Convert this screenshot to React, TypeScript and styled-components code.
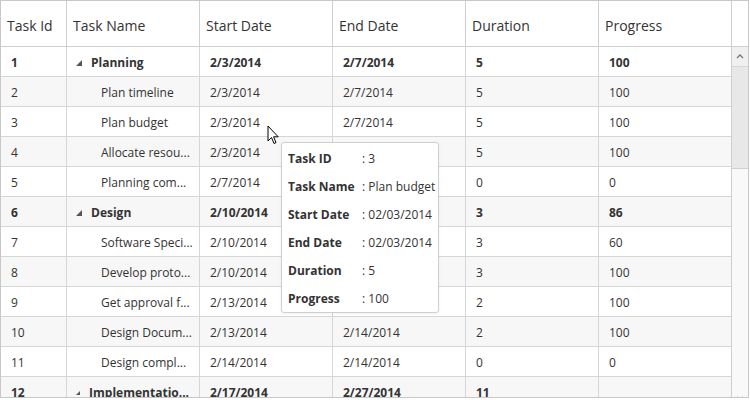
import React from 'react';
import styled, { createGlobalStyle } from 'styled-components';

const GlobalStyle = createGlobalStyle`
	html, body {
		margin: 0;
		padding: 0;
		background: #fff;
	}
	body {
		font-family: 'Open Sans', 'Noto Sans', sans-serif;
		color: #333;
	}
`;

const COLS = '65px 132px 132px 132px 132px 132px 16px';

const Page = styled.div`
	position: relative;
	width: 750px;
	height: 400px;
	overflow: hidden;
`;

const Grid = styled.div`
	width: 749px;
	height: 398px;
	box-sizing: border-box;
	border: 1px solid #c8c8c8;
	overflow: hidden;
	display: flex;
	flex-direction: column;
`;

const HeaderRow = styled.div`
	display: grid;
	grid-template-columns: ${COLS};
	column-gap: 1px;
	background: #cfcfcf;
	border-bottom: 1px solid #cfcfcf;
`;

const HeaderCell = styled.div`
	height: 45px;
	box-sizing: border-box;
	background: #fff;
	display: flex;
	align-items: center;
	padding: 3px 6px 0;
	font-size: 14px;
	color: #333;
`;

const Body = styled.div`
	display: grid;
	grid-template-columns: 1fr 16px;
	column-gap: 1px;
	background: #cfcfcf;
	flex: 1;
	min-height: 0;
`;

const Rows = styled.div`
	display: flex;
	flex-direction: column;
	background: #fff;
`;

const Row = styled.div<{ $alt: boolean }>`
	display: grid;
	grid-template-columns: 65px 132px 132px 132px 132px 132px;
	column-gap: 1px;
	background: #d6d6d6;
	border-bottom: 1px solid #d6d6d6;
	flex-shrink: 0;

	& > div {
		background: ${(p) => (p.$alt ? '#f7f7f7' : '#fff')};
	}
`;

const Cell = styled.div<{ $bold?: boolean }>`
	height: 29px;
	box-sizing: border-box;
	display: flex;
	align-items: center;
	padding: 2px 10px 0;
	font-size: 12px;
	font-weight: ${(p) => (p.$bold ? 700 : 400)};
	white-space: nowrap;
	overflow: hidden;
`;

const NameCell = styled(Cell)<{ $child?: boolean }>`
	padding-left: ${(p) => (p.$child ? '34px' : '9px')};
	gap: 9px;
`;

const Scrollbar = styled.div`
	display: flex;
	flex-direction: column;
	background: #f9f9f9;
`;

const ScrollButton = styled.div`
	height: 19px;
	display: flex;
	align-items: center;
	justify-content: center;
	background: #f0f0f0;
	border-bottom: 1px solid #d6d6d6;
	flex-shrink: 0;
`;

const Thumb = styled.div`
	height: 101px;
	background: #e8e8e8;
	border-bottom: 1px solid #cfcfcf;
	flex-shrink: 0;
`;

const Track = styled.div`
	flex: 1;
`;

const DownButton = styled(ScrollButton)`
	border-bottom: none;
	background: #f9f9f9;
	height: 17px;
`;

const Tooltip = styled.div`
	position: absolute;
	left: 281px;
	top: 142px;
	width: 158px;
	height: 171px;
	box-sizing: border-box;
	background: #fff;
	border: 1px solid #cfcfcf;
	border-radius: 3px;
	padding: 1px 0 0 6px;
	box-shadow: 0 1px 3px rgba(0, 0, 0, 0.06);
`;

const TipRow = styled.div`
	display: grid;
	grid-template-columns: 74px 1fr;
	height: 28px;
	align-items: center;
	font-size: 12px;
	white-space: nowrap;
`;

const TipLabel = styled.span`
	font-weight: 700;
`;

const Cursor = styled.svg`
	position: absolute;
	left: 267px;
	top: 125px;
`;

type Task = {
	id: number;
	name: string;
	start: string;
	end: string;
	duration: string;
	progress: string;
	parent?: boolean;
};

// end dates of rows 4-9 sit under the tooltip, so they are left blank
const tasks: Task[] = [
	{ id: 1, name: 'Planning', start: '2/3/2014', end: '2/7/2014', duration: '5', progress: '100', parent: true },
	{ id: 2, name: 'Plan timeline', start: '2/3/2014', end: '2/7/2014', duration: '5', progress: '100' },
	{ id: 3, name: 'Plan budget', start: '2/3/2014', end: '2/7/2014', duration: '5', progress: '100' },
	{ id: 4, name: 'Allocate resou...', start: '2/3/2014', end: '', duration: '5', progress: '100' },
	{ id: 5, name: 'Planning com...', start: '2/7/2014', end: '', duration: '0', progress: '0' },
	{ id: 6, name: 'Design', start: '2/10/2014', end: '', duration: '3', progress: '86', parent: true },
	{ id: 7, name: 'Software Speci...', start: '2/10/2014', end: '', duration: '3', progress: '60' },
	{ id: 8, name: 'Develop proto...', start: '2/10/2014', end: '', duration: '3', progress: '100' },
	{ id: 9, name: 'Get approval f...', start: '2/13/2014', end: '', duration: '2', progress: '100' },
	{ id: 10, name: 'Design Docum...', start: '2/13/2014', end: '2/14/2014', duration: '2', progress: '100' },
	{ id: 11, name: 'Design compl...', start: '2/14/2014', end: '2/14/2014', duration: '0', progress: '0' },
	{ id: 12, name: 'Implementatio...', start: '2/17/2014', end: '2/27/2014', duration: '11', progress: '', parent: true },
];

const tip = [
	['Task ID', '3'],
	['Task Name', 'Plan budget'],
	['Start Date', '02/03/2014'],
	['End Date', '02/03/2014'],
	['Duration', '5'],
	['Progress', '100'],
];

const Expander = () => (
	<svg width='6' height='6' viewBox='0 0 6 6'>
		<polygon points='6,0 6,6 0,6' fill='#555' />
	</svg>
);

const Chevron = ({ down }: { down?: boolean }) => (
	<svg width='8' height='5' viewBox='0 0 8 5'>
		<polyline
			points={down ? '1,1 4,4 7,1' : '1,4 4,1 7,4'}
			fill='none'
			stroke='#777'
			strokeWidth='1.3'
		/>
	</svg>
);

export default function App() {
	return (
		<Page>
			<GlobalStyle />
			<Grid>
				<HeaderRow>
					<HeaderCell>Task Id</HeaderCell>
					<HeaderCell>Task Name</HeaderCell>
					<HeaderCell>Start Date</HeaderCell>
					<HeaderCell>End Date</HeaderCell>
					<HeaderCell>Duration</HeaderCell>
					<HeaderCell>Progress</HeaderCell>
					<HeaderCell />
				</HeaderRow>
				<Body>
					<Rows>
						{tasks.map((t, i) => (
							<Row key={t.id} $alt={i % 2 === 1}>
								<Cell $bold={t.parent}>{t.id}</Cell>
								<NameCell $bold={t.parent} $child={!t.parent}>
									{t.parent && <Expander />}
									{t.name}
								</NameCell>
								<Cell $bold={t.parent}>{t.start}</Cell>
								<Cell $bold={t.parent}>{t.end}</Cell>
								<Cell $bold={t.parent}>{t.duration}</Cell>
								<Cell $bold={t.parent}>{t.progress}</Cell>
							</Row>
						))}
					</Rows>
					<Scrollbar>
						<ScrollButton>
							<Chevron />
						</ScrollButton>
						<Thumb />
						<Track />
						<DownButton>
							<Chevron down />
						</DownButton>
					</Scrollbar>
				</Body>
			</Grid>
			<Tooltip>
				{tip.map(([label, value]) => (
					<TipRow key={label}>
						<TipLabel>{label}</TipLabel>
						<span>: {value}</span>
					</TipRow>
				))}
			</Tooltip>
			<Cursor width='13' height='21' viewBox='0 0 13 21'>
				<path
					d='M1 1 L1 16 L4.5 12.5 L7 18.5 L9 17.6 L6.6 11.8 L11.2 11.8 Z'
					fill='#fff'
					stroke='#000'
					strokeWidth='1'
					strokeLinejoin='miter'
				/>
			</Cursor>
		</Page>
	);
}
